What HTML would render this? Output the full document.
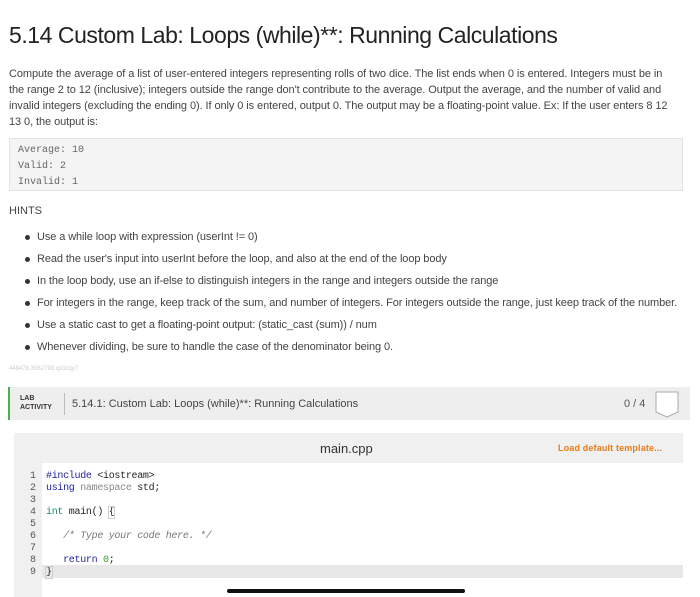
<!DOCTYPE html>
<html><head><style>
*{margin:0;padding:0;box-sizing:border-box}
body{width:700px;height:597px;overflow:hidden;background:#fff;font-family:"Liberation Sans",sans-serif;color:#333;position:relative}
.a{position:absolute;white-space:nowrap}
h1{position:absolute;left:9px;top:22px;font-size:23px;font-weight:normal;color:#222;letter-spacing:-0.45px}
.p{position:absolute;left:9px;top:66px;width:700px;font-size:11px;line-height:16px;color:#444;letter-spacing:-0.08px}
.pre{position:absolute;left:9px;top:138px;width:674px;height:53px;background:#f4f4f4;border:1px solid #e2e2e2;font-family:"Liberation Mono",monospace;font-size:10px;color:#666;padding:4px 8px;line-height:16px}
ul{position:absolute;left:24px;top:227px;font-size:11px;color:#444;letter-spacing:-0.1px;list-style:none}
li{height:22px;line-height:20px;position:relative;padding-left:13px;white-space:nowrap}
li:before{content:"";position:absolute;left:1px;top:8px;width:5px;height:5px;border-radius:50%;background:#333}
.code{font-family:"Liberation Mono",monospace;font-size:10px;line-height:12px}
</style></head><body>
<h1>5.14 Custom Lab: Loops (while)**: Running Calculations</h1>
<div class="p">Compute the average of a list of user-entered integers representing rolls of two dice. The list ends when 0 is entered. Integers must be in<br>the range 2 to 12 (inclusive); integers outside the range don't contribute to the average. Output the average, and the number of valid and<br>invalid integers (excluding the ending 0). If only 0 is entered, output 0. The output may be a floating-point value. Ex: If the user enters 8 12<br>13 0, the output is:</div>
<div class="pre">Average: 10<br>Valid: 2<br>Invalid: 1</div>
<div class="a" style="left:9px;top:205px;font-size:11px;color:#444">HINTS</div>
<ul>
<li>Use a while loop with expression (userInt != 0)</li>
<li>Read the user's input into userInt before the loop, and also at the end of the loop body</li>
<li>In the loop body, use an if-else to distinguish integers in the range and integers outside the range</li>
<li>For integers in the range, keep track of the sum, and number of integers. For integers outside the range, just keep track of the number.</li>
<li>Use a static cast to get a floating-point output: (static_cast (sum)) / num</li>
<li>Whenever dividing, be sure to handle the case of the denominator being 0.</li>
</ul>
<div class="a" style="left:9px;top:366px;font-size:6px;color:#ccc">448478.3062798.qx3zqy7</div>
<div class="a" style="left:8px;top:387px;width:682px;height:33px;background:#eee;border-left:2px solid #4caf50"></div>
<div class="a" style="left:20px;top:394px;font-size:7px;font-weight:bold;line-height:9px;color:#333">LAB<br>ACTIVITY</div>
<div class="a" style="left:64px;top:393px;width:1px;height:22px;background:#bbb"></div>
<div class="a" style="left:72px;top:398px;font-size:11px;color:#444;letter-spacing:0px">5.14.1: Custom Lab: Loops (while)**: Running Calculations</div>
<div class="a" style="left:624px;top:398px;font-size:11px;color:#555">0 / 4</div>
<svg class="a" style="left:655px;top:391px" width="24" height="27"><path d="M1 1H23V21L12 26L1 21Z" fill="#fff" stroke="#aaa"/></svg>
<div class="a" style="left:8px;top:420px;width:682px;height:177px;background:#fff"></div>
<div class="a" style="left:14px;top:433px;width:669px;height:164px;background:#f0f0f0"></div>
<div class="a" style="left:320px;top:441px;font-size:13px;color:#333">main.cpp</div>
<div class="a" style="left:558px;top:443px;font-size:9px;font-weight:bold;color:#e57b1a;letter-spacing:0.15px">Load default template...</div>
<div class="a" style="left:42px;top:463px;width:641px;height:134px;background:#fff"></div>
<div class="a" style="left:42px;top:565px;width:641px;height:13px;background:#e8e8e8"></div>
<div class="a code" style="left:30px;top:471px;color:#555;text-align:right">1<br>2<br>3<br>4<br>5<br>6<br>7<br>8<br>9</div>
<div class="a code" style="left:46px;top:471px;color:#222;letter-spacing:-0.3px"><span style="color:#229">#include</span> &lt;iostream&gt;<br><span style="color:#229">using</span> <span style="color:#888">namespace</span> std;<br><br><span style="color:#286">int</span> main() <span style="outline:1px solid #ccc">{</span><br><br>&nbsp;&nbsp;&nbsp;<i style="color:#777">/* Type your code here. */</i><br><br>&nbsp;&nbsp;&nbsp;<span style="color:#229">return</span> <span style="color:#393">0</span>;<br><span style="outline:1px solid #ccc">}</span></div>
<div class="a" style="left:227px;top:589px;width:238px;height:4px;border-radius:2px;background:#111"></div>
</body></html>
